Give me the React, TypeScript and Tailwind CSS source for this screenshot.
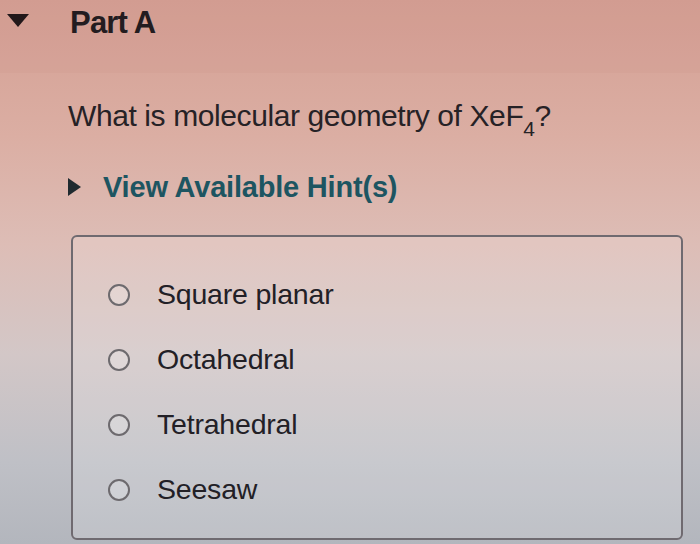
export default function App() {
  const options = ["Square planar", "Octahedral", "Tetrahedral", "Seesaw"];
  return (
    <div
      className="w-[700px] h-[544px] overflow-hidden flex flex-col bg-[linear-gradient(180deg,#d49f93_0%,#dbaea3_25%,#ddbdb6_45%,#d3c7c7_65%,#bfc0c6_85%,#b3b6bd_100%)]"
      style={{ fontFamily: '"Liberation Sans", Arial, sans-serif' }}
    >
      <div className="h-[73px] flex items-start bg-[#c98f83]/15 pt-[4px]">
        <div className="w-[70px] flex pl-[7px] pt-[10px]">
          <svg width="22" height="14" viewBox="0 0 22 14">
            <polygon points="0,0 22,0 11,13" fill="#22181a" />
          </svg>
        </div>
        <div className="text-[31px] font-bold text-[#231c20] tracking-[-0.8px] leading-[38px]">Part A</div>
      </div>
      <div className="pl-[68px] pt-[24px] text-[30px] text-[#262226] leading-[38px] tracking-[-0.4px]">
        What is molecular geometry of XeF
        <sub className="text-[21px] align-[-5px]">4</sub>?
      </div>
      <div className="pl-[68px] pt-[36px] flex items-center">
        <svg width="13" height="18" viewBox="0 0 13 18" className="mr-[22px]">
          <polygon points="0,0 13,9 0,18" fill="#1f2a2f" />
        </svg>
        <span className="text-[29px] font-bold text-[#1d5561] tracking-[-0.2px] leading-[32px]">
          View Available Hint(s)
        </span>
      </div>
      <div className="ml-[71px] mr-[17px] mt-[32px] mb-[4px] flex-1 border-[2px] border-[#6f6a70] rounded-[6px] bg-white/15 pl-[35px] pt-[40px] flex flex-col gap-[30px]">
        {options.map((o) => (
          <div key={o} className="flex items-center h-[35px]">
            <div className="w-[22px] h-[22px] rounded-full border-[2px] border-[#6d6a6e] bg-white/20" />
            <span className="ml-[27px] text-[28.5px] text-[#222026] tracking-[-0.2px]">{o}</span>
          </div>
        ))}
      </div>
    </div>
  );
}
